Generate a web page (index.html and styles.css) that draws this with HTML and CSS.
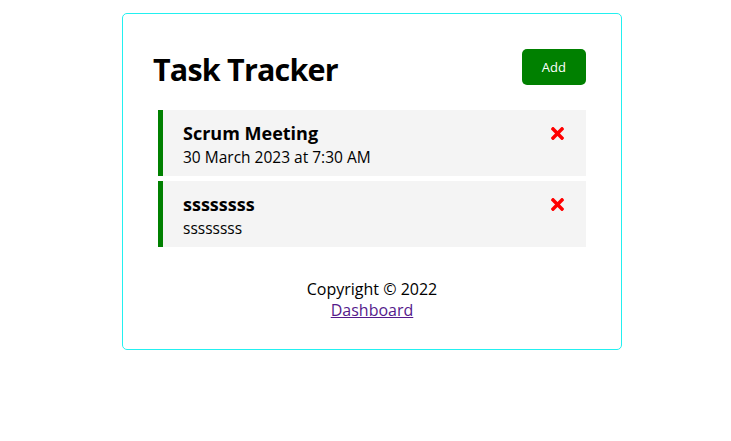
FILE: index.html
```html
<!DOCTYPE html>
<html lang="en">
<head>
<meta charset="utf-8">
<title>Task Tracker</title>
<link rel="stylesheet" href="styles.css">
</head>
<body>
<div class="container">
  <header class="header">
    <h1 class="title">Task Tracker</h1>
    <button class="btn">Add</button>
  </header>
  <div class="task reminder">
    <h3 class="task-title">Scrum Meeting
      <svg class="icon-x" viewBox="0 0 352 512" aria-hidden="true"><path fill="red" d="M242.72 256l100.07-100.07c12.28-12.28 12.28-32.19 0-44.48l-22.24-22.24c-12.28-12.28-32.19-12.28-44.48 0L176 189.28 75.93 89.21c-12.28-12.28-32.19-12.28-44.48 0L9.21 111.45c-12.28 12.28-12.28 32.19 0 44.48L109.28 256 9.21 356.07c-12.28 12.28-12.28 32.19 0 44.48l22.24 22.24c12.28 12.28 32.2 12.28 44.48 0L176 322.72l100.07 100.07c12.28 12.28 32.2 12.28 44.48 0l22.24-22.24c12.28-12.28 12.28-32.19 0-44.48L242.72 256z"/></svg>
    </h3>
    <p class="task-day">30 March 2023 at 7:30 AM</p>
  </div>
  <div class="task reminder">
    <h3 class="task-title">ssssssss
      <svg class="icon-x" viewBox="0 0 352 512" aria-hidden="true"><path fill="red" d="M242.72 256l100.07-100.07c12.28-12.28 12.28-32.19 0-44.48l-22.24-22.24c-12.28-12.28-32.19-12.28-44.48 0L176 189.28 75.93 89.21c-12.28-12.28-32.19-12.28-44.48 0L9.21 111.45c-12.28 12.28-12.28 32.19 0 44.48L109.28 256 9.21 356.07c-12.28 12.28-12.28 32.19 0 44.48l22.24 22.24c12.28 12.28 32.2 12.28 44.48 0L176 322.72l100.07 100.07c12.28 12.28 32.2 12.28 44.48 0l22.24-22.24c12.28-12.28 12.28-32.19 0-44.48L242.72 256z"/></svg>
    </h3>
    <p class="task-day">ssssssss</p>
  </div>
  <footer class="footer">
    <p class="copy">Copyright &copy; 2022</p>
    <a class="footer-link" href="#">Dashboard</a>
  </footer>
</div>
</body>
</html>
```
FILE: styles.css
```css
* {
  box-sizing: border-box;
  margin: 0;
  padding: 0;
}
body {
  font-family: "Open Sans", "Noto Sans", sans-serif;
  color: #000;
  background: #fff;
}
.container {
  width: 500px;
  margin: 13px 0 0 122px;
  min-height: 300px;
  border: 1px solid #22f0f0;
  border-radius: 5px;
  padding: 30px 30px 28px;
  overflow: auto;
}
.header {
  display: flex;
  justify-content: space-between;
  align-items: center;
  margin-bottom: 20px;
}
.title {
  padding-top: 3px;
  font-size: 30.5px;
  font-weight: 700;
  line-height: 40px;
  letter-spacing: -0.8px;
}
.btn {
  display: inline-block;
  background: #008000;
  color: #fff;
  border: none;
  border-radius: 5px;
  margin: 5px;
  padding: 10px 20px;
  font-family: "Open Sans", sans-serif;
  font-size: 13px;
  line-height: 16px;
  cursor: pointer;
}
.task {
  background: #f4f4f4;
  margin: 5px;
  padding: 10px 20px 9px;
}
.reminder {
  border-left: 5px solid #008000;
}
.task-title {
  display: flex;
  align-items: center;
  justify-content: space-between;
  padding-top: 1px;
  font-size: 18px;
  font-weight: 700;
  line-height: 25px;
}
.icon-x {
  width: 13px;
  height: 19px;
  margin-right: 2px;
}
.task-day {
  padding-top: 2px;
  font-size: 15.5px;
  line-height: 19px;
}
.footer {
  margin-top: 32px;
  text-align: center;
  font-size: 16px;
  line-height: 21px;
}
.footer-link {
  color: #551a8b;
}
```
